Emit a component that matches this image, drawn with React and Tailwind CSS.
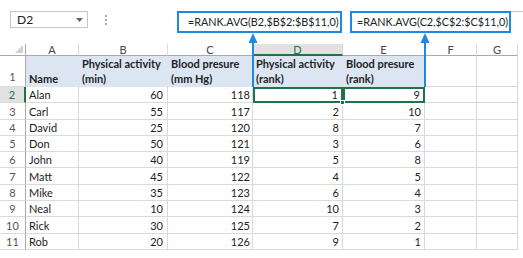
import React from 'react'

const rows = [
  ['Alan', 60, 118, 1, 9],
  ['Carl', 55, 117, 2, 10],
  ['David', 25, 120, 8, 7],
  ['Don', 50, 121, 3, 6],
  ['John', 40, 119, 5, 8],
  ['Matt', 45, 122, 4, 5],
  ['Mike', 35, 123, 6, 4],
  ['Neal', 10, 124, 10, 3],
  ['Rick', 30, 125, 7, 2],
  ['Rob', 20, 126, 9, 1],
]

const cols = ['A', 'B', 'C', 'D', 'E', 'F', 'G']

const Arrow = ({ left }) => (
  <div className="absolute top-[33px] w-[10px] h-[54px]" style={{ left }}>
    <svg width="10" height="54" viewBox="0 0 10 54">
      <line x1="5" y1="6" x2="5" y2="54" stroke="#1e88e5" strokeWidth="2" />
      <polygon points="5,0 0.5,10 9.5,10" fill="#1e88e5" />
    </svg>
  </div>
)

const App = () => {
  return (
    <div className="relative w-[523px] h-[258px] bg-white overflow-hidden text-[#222]" style={{ fontFamily: 'Lato, "Liberation Sans", sans-serif' }}>
      {/* formula bar */}
      <div className="flex items-start h-[44px] pt-[11px]">
        <div className="ml-[10px] w-[78px] h-[17px] border border-[#c6c6c6] flex items-center justify-between pl-[6px] pr-[4px] text-[12px]">
          <span>D2</span>
          <svg width="7" height="4" viewBox="0 0 7 4"><polygon points="0,0 7,0 3.5,4" fill="#666" /></svg>
        </div>
        <div className="w-[89px] h-[17px] flex items-center pl-[17px]">
          <div className="flex flex-col gap-[2px]">
            <span className="w-[2px] h-[2px] bg-[#aaa]" />
            <span className="w-[2px] h-[2px] bg-[#aaa]" />
            <span className="w-[2px] h-[2px] bg-[#aaa]" />
          </div>
        </div>
        <div className="w-[165px] h-[22px] border-2 border-[#1e88e5] flex items-center pl-[9px] text-[10.8px] whitespace-nowrap">
          =RANK.AVG(B2,$B$2:$B$11,0)
        </div>
        <div className="w-[8px]" />
        <div className="w-[161px] h-[22px] border-2 border-[#1e88e5] flex items-center pl-[5px] text-[10.8px] whitespace-nowrap">
          =RANK.AVG(C2,$C$2:$C$11,0)
        </div>
        <div className="flex-1 h-[22px] border-t border-[#c6c6c6]" />
      </div>

      {/* sheet */}
      <div className="grid text-[11px] w-[518px]" style={{ gridTemplateColumns: '26px 53px 89px 85px 90px 82px 52px 41px' }}>
        {/* header row */}
        <div className="relative h-[12px] border-r border-b border-[#ababab]">
          <svg className="absolute right-[2px] bottom-[2px]" width="8" height="8" viewBox="0 0 8 8"><polygon points="8,0 8,8 0,8" fill="#d0d0d0" /></svg>
        </div>
        {cols.map((c) => (
          <div
            key={c}
            className={
              c === 'D'
                ? 'h-[12px] flex items-center justify-center bg-[#e1e1e1] text-[#217346] border-r border-[#d4d4d4] border-b-2 border-b-[#217346] leading-none'
                : 'h-[12px] flex items-center justify-center text-[#444] border-r border-[#dadada] border-b border-b-[#ababab] leading-none'
            }
          >
            {c}
          </div>
        ))}

        {/* row 1 */}
        <div className="h-[31px] flex items-end justify-center pb-[1px] text-[#555] border-r border-[#ababab] border-b border-b-[#dadada]">1</div>
        <div className="h-[31px] bg-[#dce6f2] flex items-end pl-[3px] pb-[1px] font-bold leading-[15px]">Name</div>
        <div className="h-[31px] bg-[#dce6f2] flex items-end pl-[3px] pb-[1px] font-bold leading-[15px]">Physical activity<br />(min)</div>
        <div className="h-[31px] bg-[#dce6f2] flex items-end pl-[3px] pb-[1px] font-bold leading-[15px]">Blood presure<br />(mm Hg)</div>
        <div className="h-[31px] bg-[#dce6f2] flex items-end pl-[3px] pb-[1px] font-bold leading-[15px]">Physical activity<br />(rank)</div>
        <div className="h-[31px] bg-[#dce6f2] flex items-end pl-[3px] pb-[1px] font-bold leading-[15px]">Blood presure<br />(rank)</div>
        <div className="h-[31px] border-r border-b border-[#dadada]" />
        <div className="h-[31px] border-r border-b border-[#dadada]" />

        {rows.map((r, i) => {
          const n = i + 2
          const sel = n === 2
          return (
            <React.Fragment key={n}>
              <div
                className={
                  sel
                    ? 'h-[16.3px] flex items-end justify-center text-[#217346] bg-[#e1e1e1] border-r-2 border-[#217346] border-b border-b-[#dadada] leading-[15px]'
                    : 'h-[16.3px] flex items-end justify-center text-[#555] border-r border-[#ababab] border-b border-b-[#dadada] leading-[15px]'
                }
              >
                {n}
              </div>
              <div className="h-[16.3px] flex items-end pl-[3px] border-r border-b border-[#dadada] leading-[15px]">{r[0]}</div>
              <div className="h-[16.3px] flex items-end justify-end pr-[4px] border-r border-b border-[#dadada] leading-[15px]">{r[1]}</div>
              <div className="h-[16.3px] flex items-end justify-end pr-[2px] border-r border-b border-[#dadada] leading-[15px]">{r[2]}</div>
              <div
                className={
                  sel
                    ? 'relative h-[16.3px] flex items-end justify-end pr-[3px] border-2 border-[#217346] leading-[13px]'
                    : 'h-[16.3px] flex items-end justify-end pr-[3px] border-r border-b border-[#dadada] leading-[15px]'
                }
              >
                {r[3]}
                {sel && <span className="absolute right-[-4px] bottom-[-4px] w-[5px] h-[5px] bg-[#217346] border border-white" />}
              </div>
              <div
                className={
                  sel
                    ? 'h-[16.3px] flex items-end justify-end pr-[3px] border-2 border-[#217346] leading-[13px]'
                    : 'h-[16.3px] flex items-end justify-end pr-[3px] border-r border-b border-[#dadada] leading-[15px]'
                }
              >
                {r[4]}
              </div>
              <div className="h-[16.3px] border-r border-b border-[#dadada]" />
              <div className="h-[16.3px] border-r border-b border-[#dadada]" />
            </React.Fragment>
          )
        })}
      </div>

      <Arrow left="248px" />
      <Arrow left="420px" />
    </div>
  )
}

export default App
